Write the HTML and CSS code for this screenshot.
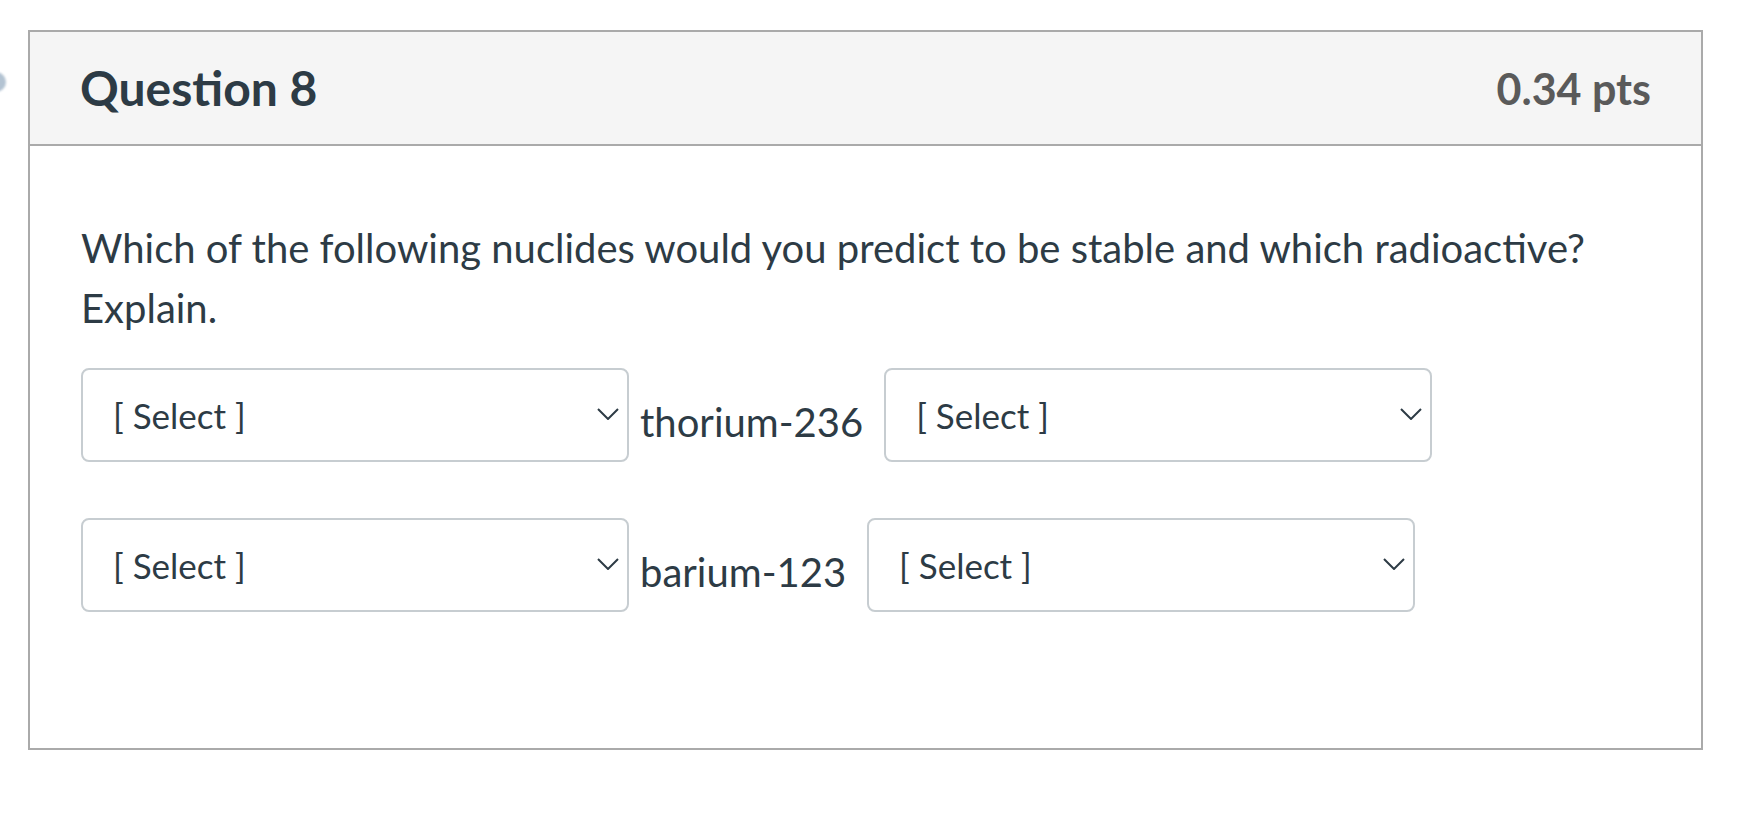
FILE: index.html
```html
<!DOCTYPE html>
<html lang="en">
<head>
    <meta charset="UTF-8">
    <meta name="viewport" content="width=device-width, initial-scale=1.0">
    <title>Question 8</title>
    <link rel="stylesheet" href="styles.css">
</head>
<body>
    <span class="flag" aria-hidden="true"></span>

    <div class="question">
        <div class="question-header">
            <h2 class="question-name">Question 8</h2>
            <span class="points">0.34 pts</span>
        </div>

        <div class="question-text">
            <p>Which of the following nuclides would you predict to be stable and which radioactive? Explain.</p>

            <div class="answer-row">
                <span class="select-wrap">
                    <select><option>[ Select ]</option></select>
                    <svg class="chevron" width="22" height="12" viewBox="0 0 22 12"><path d="M1 1 L11 11 L21 1"/></svg>
                </span>
                <span class="nuclide">thorium-236</span>
                <span class="select-wrap">
                    <select><option>[ Select ]</option></select>
                    <svg class="chevron" width="22" height="12" viewBox="0 0 22 12"><path d="M1 1 L11 11 L21 1"/></svg>
                </span>
            </div>

            <div class="answer-row">
                <span class="select-wrap">
                    <select><option>[ Select ]</option></select>
                    <svg class="chevron" width="22" height="12" viewBox="0 0 22 12"><path d="M1 1 L11 11 L21 1"/></svg>
                </span>
                <span class="nuclide">barium-123</span>
                <span class="select-wrap">
                    <select><option>[ Select ]</option></select>
                    <svg class="chevron" width="22" height="12" viewBox="0 0 22 12"><path d="M1 1 L11 11 L21 1"/></svg>
                </span>
            </div>
        </div>
    </div>
</body>
</html>
```

FILE: styles.css
```css
body {
    margin: 0;
    font-family: Lato, "Noto Sans", sans-serif;
    color: #2d3b45;
    background: #fff;
}
.flag {
    position: absolute;
    left: -14px;
    top: 72px;
    width: 20px;
    height: 20px;
    border-radius: 50%;
    background: #b3c3d2;
    filter: blur(1px);
}
.question {
    margin: 30px 0 0 28px;
    width: 1675px;
    border: 2px solid #aaa;
    box-sizing: border-box;
}
.question-header {
    display: flex;
    justify-content: space-between;
    align-items: center;
    height: 112px;
    padding: 0 50px;
    background: #f5f5f5;
    border-bottom: 2px solid #aaa;
}
.question-name {
    margin: 0;
    font-size: 48px;
    font-weight: 700;
    line-height: 58px;
}
.points {
    font-size: 43px;
    font-weight: 700;
    color: #5a5a5a;
}
.question-text {
    padding: 72px 50px 136px 51px;
    font-size: 40px;
    line-height: 60px;
}
.question-text p {
    margin: 0 0 30px;
}
.answer-row {
    display: flex;
    align-items: flex-start;
}
.answer-row + .answer-row {
    margin-top: 56px;
}
.select-wrap {
    position: relative;
    flex: none;
    width: 548px;
    height: 94px;
}
select {
    appearance: none;
    -webkit-appearance: none;
    width: 100%;
    height: 100%;
    margin: 0;
    padding: 0 50px 0 30px;
    font-family: Lato, "Noto Sans", sans-serif;
    font-size: 35px;
    color: #2d3b45;
    background: #fff;
    border: 2px solid #c7cdd1;
    border-radius: 8px;
}
.chevron {
    position: absolute;
    right: 10px;
    top: 40px;
    fill: none;
    stroke: #2d3b45;
    stroke-width: 2;
    pointer-events: none;
}
.nuclide {
    margin: 24px 21px 0 11px;
    white-space: nowrap;
}
```
